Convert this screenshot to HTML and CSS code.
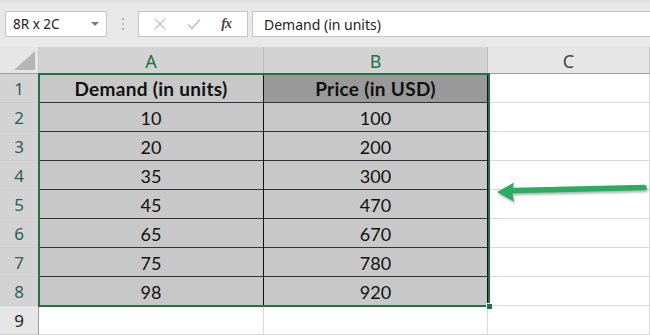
FILE: index.html
```html
<!DOCTYPE html>
<html lang="en">
<head>
    <meta charset="UTF-8">
    <meta name="viewport" content="width=device-width, initial-scale=1.0">
    <title>Demand and Price</title>
    <link rel="stylesheet" href="styles.css">
</head>
<body>
    <div class="toolbar">
        <div class="namebox">
            <span>8R x 2C</span>
            <span class="caret"></span>
        </div>
        <div class="grip"><i></i><i></i><i></i></div>
        <div class="fx-buttons">
            <svg class="btn-icon" width="12" height="12" viewBox="0 0 12 12">
                <path d="M1 1 L11 11 M11 1 L1 11" stroke="#c3c3c3" stroke-width="1.3" fill="none"/>
            </svg>
            <svg class="btn-icon" width="14" height="12" viewBox="0 0 14 12">
                <path d="M1 6.5 L5 10.5 L13 1.5" stroke="#c3c3c3" stroke-width="1.6" fill="none"/>
            </svg>
            <span class="fx">fx</span>
        </div>
        <div class="formula">Demand (in units)</div>
    </div>

    <div class="sheet">
        <div class="grid">
            <div class="corner">
                <svg width="21" height="19" viewBox="0 0 21 19"><path d="M21 0 L21 19 L0 19 Z" fill="#b5b5b5"/></svg>
            </div>
            <div class="col-head sel">A</div>
            <div class="col-head sel">B</div>
            <div class="col-head">C</div>

            <div class="row-head sel">1</div>
            <div class="cell data title">Demand (in units)</div>
            <div class="cell data title dark">Price (in USD)</div>
            <div class="cell"></div>

            <div class="row-head sel">2</div>
            <div class="cell data">10</div>
            <div class="cell data">100</div>
            <div class="cell"></div>

            <div class="row-head sel">3</div>
            <div class="cell data">20</div>
            <div class="cell data">200</div>
            <div class="cell"></div>

            <div class="row-head sel">4</div>
            <div class="cell data">35</div>
            <div class="cell data">300</div>
            <div class="cell"></div>

            <div class="row-head sel">5</div>
            <div class="cell data">45</div>
            <div class="cell data">470</div>
            <div class="cell"></div>

            <div class="row-head sel">6</div>
            <div class="cell data">65</div>
            <div class="cell data">670</div>
            <div class="cell"></div>

            <div class="row-head sel">7</div>
            <div class="cell data">75</div>
            <div class="cell data">780</div>
            <div class="cell"></div>

            <div class="row-head sel">8</div>
            <div class="cell data">98</div>
            <div class="cell data">920</div>
            <div class="cell"></div>

            <div class="row-head">9</div>
            <div class="cell"></div>
            <div class="cell"></div>
            <div class="cell"></div>
        </div>

        <!-- second layer with the same tracks: selection frame and the arrow -->
        <div class="grid overlay">
            <div class="selection"><span class="handle"></span></div>
            <svg class="arrow" width="162" height="58" viewBox="0 0 162 58">
                <path d="M26 29.5 L156 26.5" stroke="#2aad60" stroke-width="5.5" stroke-linecap="round" fill="none"/>
                <path d="M9 31 L26 21.5 Q23 30.5 26 40.5 Z" fill="#2aad60"/>
            </svg>
        </div>
    </div>
</body>
</html>
```

FILE: styles.css
```css
* {
    box-sizing: border-box;
}
body {
    margin: 0;
    width: 650px;
    height: 335px;
    overflow: hidden;
    background: #fff;
    font-family: "Noto Sans", sans-serif;
    color: #222;
}
.toolbar {
    height: 47px;
    background: #e9e9e9;
    display: flex;
    align-items: flex-start;
    padding: 8px 0 0 5px;
    border-top: 3px solid #e1e1e1;
}
.namebox, .fx-buttons, .formula {
    height: 26px;
    background: #fff;
    border: 1px solid #c6c6c6;
    display: flex;
    align-items: center;
    font-size: 13px;
    color: #222;
}
.namebox {
    width: 102px;
    padding: 0 6px 0 7px;
    justify-content: space-between;
    font-size: 13.5px;
}
.caret {
    width: 0;
    height: 0;
    border-left: 4px solid transparent;
    border-right: 4px solid transparent;
    border-top: 4px solid #7a7a7a;
    margin-right: 1px;
}
.grip {
    width: 31px;
    height: 26px;
    display: flex;
    flex-direction: column;
    align-items: center;
    justify-content: center;
    gap: 3px;
}
.grip i {
    width: 2px;
    height: 2px;
    background: #b3b3b3;
}
.fx-buttons {
    width: 110px;
    padding: 0 16px 0 15px;
    justify-content: space-between;
}
.fx {
    font-family: "Liberation Serif", serif;
    font-style: italic;
    font-weight: bold;
    font-size: 14px;
    color: #444;
    letter-spacing: -1px;
}
.formula {
    flex: 1;
    margin-left: 4px;
    padding-left: 11px;
    border-right: none;
    font-size: 14px;
}

.sheet {
    display: grid;
}
.grid {
    grid-area: 1 / 1;
    display: grid;
    grid-template-columns: 39px 225px 224px 1fr;
    grid-template-rows: 27px repeat(9, 29px);
}
.corner {
    background: #e6e6e6;
    border-right: 1px solid #c8c8c8;
    border-bottom: 1px solid #9b9b9b;
    display: flex;
    align-items: flex-end;
    justify-content: flex-end;
    padding: 0 3px 3px 0;
}
.col-head {
    background: #e6e6e6;
    border-right: 1px solid #c2c2c2;
    border-bottom: 1px solid #9b9b9b;
    display: flex;
    align-items: center;
    justify-content: center;
    font-size: 18px;
    color: #444;
    padding-top: 1px;
}
.row-head {
    background: #e6e6e6;
    border-right: 1px solid #9b9b9b;
    border-bottom: 1px solid #cdcdcd;
    display: flex;
    align-items: center;
    justify-content: center;
    font-size: 17px;
    color: #222;
    padding-top: 1px;
}
.col-head.sel, .row-head.sel {
    background: #d3d3d3;
    color: #217346;
}
.row-head.sel {
    color: #2a5f57;
}
.col-head.sel {
    border-right-color: #bdbdbd;
}
.cell {
    border-right: 1px solid #d9d9d9;
    border-bottom: 1px solid #d9d9d9;
}
.cell.data {
    background: #c8c8c8;
    border-right-color: #111;
    border-bottom-color: #333;
    display: flex;
    align-items: center;
    justify-content: center;
    font-family: Lato, sans-serif;
    font-size: 18px;
    color: #111;
    padding-top: 1px;
}
.cell.title {
    font-weight: bold;
    font-size: 19px;
    letter-spacing: 0.3px;
}
.cell.dark {
    background: #999;
}

.overlay {
    pointer-events: none;
}
.selection {
    grid-column: 2 / 4;
    grid-row: 2 / 10;
    margin: -1px -2px -1px -1px;
    border: 2px solid #217346;
    position: relative;
}
.handle {
    position: absolute;
    right: -5px;
    bottom: -5px;
    width: 7px;
    height: 7px;
    background: #217346;
    border: 1px solid #fff;
}
.arrow {
    grid-column: 4;
    grid-row: 5 / 7;
    filter: drop-shadow(1px 2px 1px rgba(0, 0, 0, 0.3));
}
```
